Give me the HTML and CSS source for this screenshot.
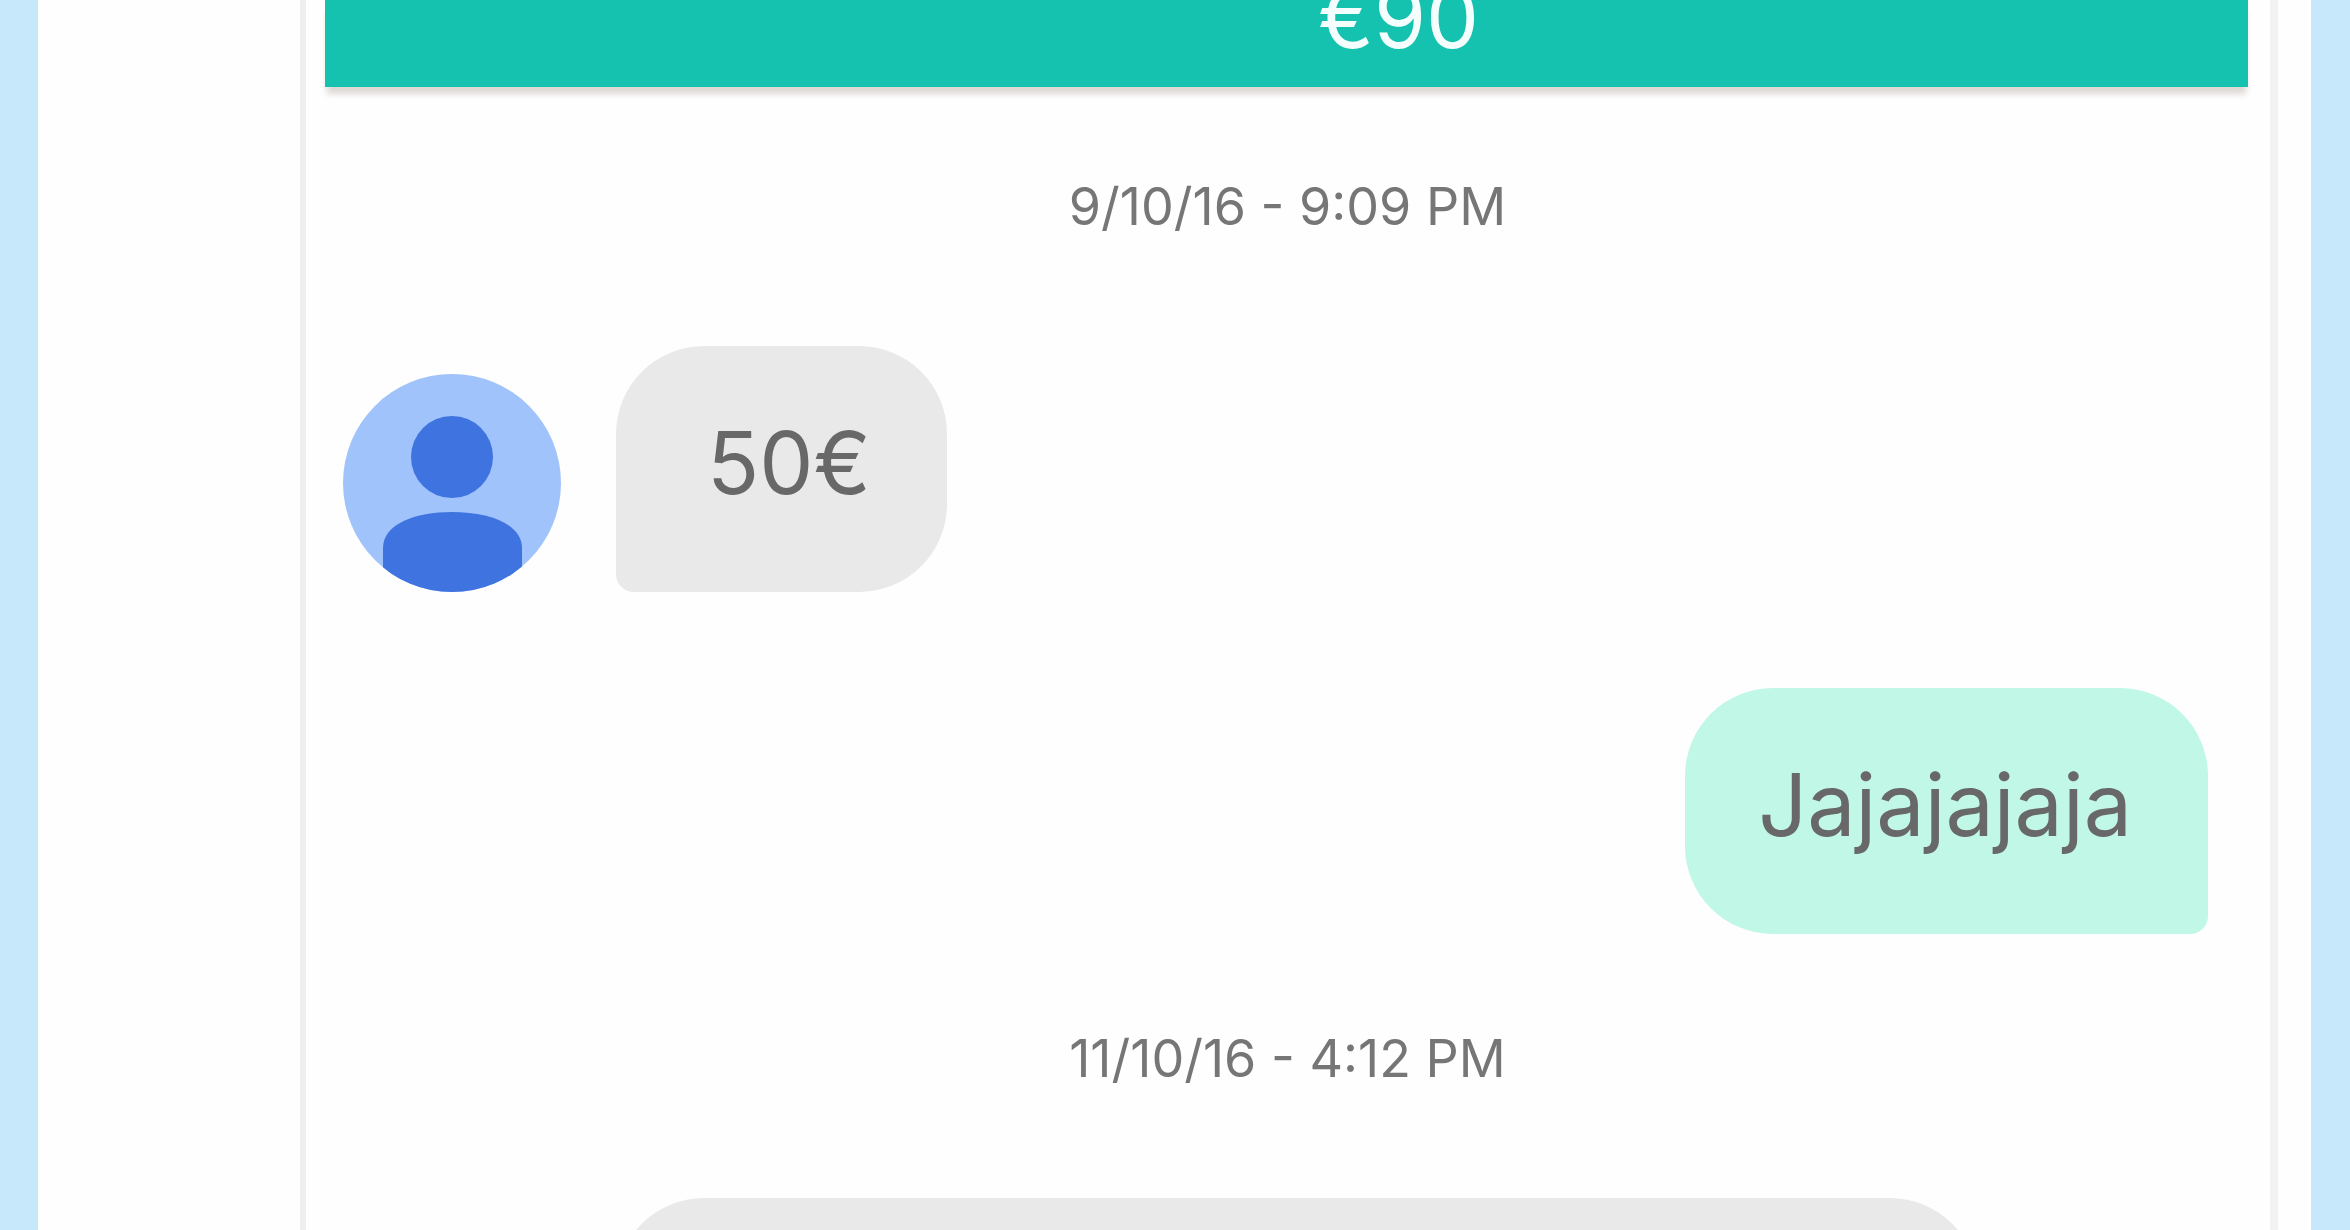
FILE: index.html
```html
<!DOCTYPE html>
<html lang="en">
<head>
<meta charset="utf-8">
<meta name="viewport" content="width=device-width, initial-scale=1">
<title>Chat</title>
<link rel="stylesheet" href="styles.css">
</head>
<body>
<div class="page">
  <main class="phone">
    <header class="top-bar"><h1 class="price">€90</h1></header>
    <section class="chat">
      <time class="stamp">9/10/16 - 9:09 PM</time>
      <div class="message received">
        <svg class="avatar" viewBox="0 0 218 218" role="img" aria-label="Contact">
          <defs><clipPath id="disc"><circle cx="109" cy="109" r="109"/></clipPath></defs>
          <g clip-path="url(#disc)">
            <rect width="218" height="218" fill="#a0c3fc"/>
            <circle cx="109" cy="83" r="41" fill="#3f73df"/>
            <path d="M40 218V174C40 150 72 138 109 138S179 150 179 174V218Z" fill="#3f73df"/>
          </g>
        </svg>
        <p class="bubble">50€</p>
      </div>
      <div class="message sent"><p class="bubble">Jajajajaja</p></div>
      <time class="stamp">11/10/16 - 4:12 PM</time>
      <div class="message received long"><p class="bubble"></p></div>
    </section>
  </main>
</div>
</body>
</html>
```
FILE: styles.css
```css
* {
  box-sizing: border-box;
}

body {
  margin: 0;
  padding: 0 39px 0 38px;
  height: 100vh;
  overflow: hidden;
  background: #c7e8fb;
  color: #686868;
  font-family: Inter, "Liberation Sans", sans-serif;
}

.page {
  min-height: 100%;
  padding: 0 33px 0 262px;
  background: #fefefe;
}

.phone {
  border-left: 6px solid #efeff0;
  border-right: 8px solid #f2f2f4;
}

.top-bar {
  display: flex;
  align-items: flex-end;
  justify-content: center;
  height: 87px;
  margin: 0 22px 0 19px;
  padding: 0 0 17px 224px;
  background: #15c1af;
  box-shadow: 0 9px 6px -2px #dcd8d4;
}

.price {
  margin: 0;
  color: #f4fffd;
  font-size: 84px;
  font-weight: 400;
  line-height: 104px;
}

.chat {
  display: flex;
  flex-direction: column;
  padding: 88px 62px 0 37px;
}

.stamp {
  padding-left: 24px;
  color: #767676;
  font-size: 52px;
  line-height: 64px;
  text-align: center;
}

.message {
  display: flex;
  align-items: flex-end;
  gap: 55px;
}

.received {
  margin-top: 107px;
}

.sent {
  justify-content: flex-end;
  margin-top: 96px;
}

.sent + .stamp {
  margin-top: 93px;
}

.avatar {
  width: 218px;
  height: 218px;
}

.bubble {
  min-height: 246px;
  margin: 0;
  padding: 65px 76px 77px;
  border-radius: 88px;
  font-size: 86px;
  line-height: 104px;
}

.received .bubble {
  padding-left: 91px;
  border-bottom-left-radius: 18px;
  background: #e9e9e9;
}

.sent .bubble {
  padding-left: 73px;
  border-bottom-right-radius: 18px;
  background: #c1f7e6;
}

.long {
  padding: 0 230px 0 273px;
}

.long .bubble {
  flex: 1;
}
```
